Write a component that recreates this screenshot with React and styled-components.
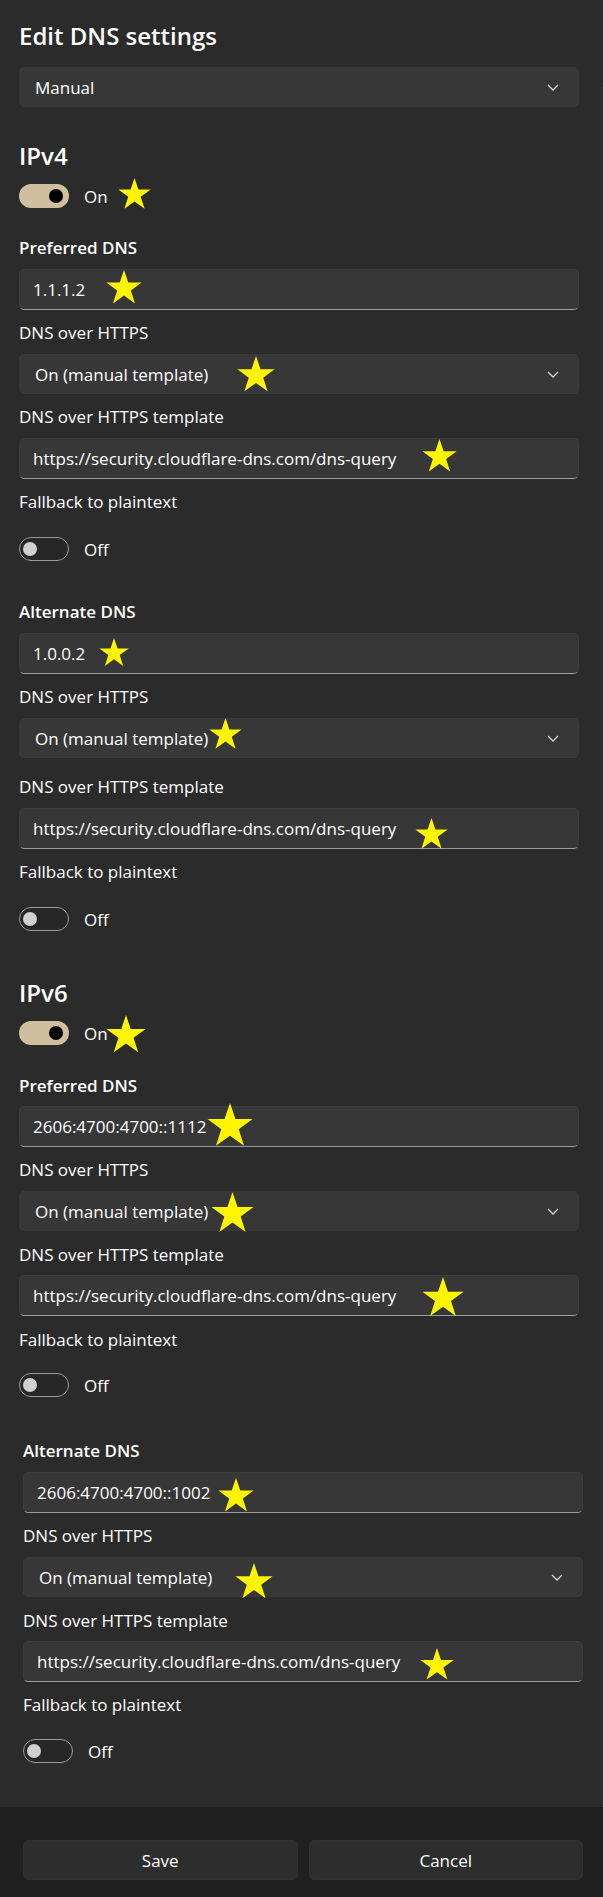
import React from 'react';
import styled, { createGlobalStyle } from 'styled-components';

const GlobalStyle = createGlobalStyle`
  html, body {
    margin: 0;
    padding: 0;
    background: #202020;
  }
  body {
    font-family: 'Open Sans', 'Noto Sans', sans-serif;
    color: #ffffff;
    -webkit-font-smoothing: antialiased;
  }
`;

const Page = styled.div`
  width: 603px;
  display: flex;
  flex-direction: column;
`;

const Content = styled.div`
  position: relative;
  background: #2b2b2b;
  padding: 20px 24px 44px 19px;

  &::after {
    content: '';
    position: absolute;
    right: 0;
    top: 87px;
    bottom: 0;
    width: 1px;
    background: #333333;
  }
`;

const Title = styled.h1`
  margin: 0 0 15px;
  font-size: 24px;
  line-height: 32px;
  font-weight: 600;
`;

const Heading = styled.h2`
  margin: ${(p) => p.$mt}px 0 12px;
  font-size: 24px;
  line-height: 32px;
  font-weight: 600;
`;

const Label = styled.div`
  margin: ${(p) => p.$mt}px 0 ${(p) => p.$mb}px;
  font-size: 17px;
  line-height: 24px;
  font-weight: ${(p) => (p.$strong ? 600 : 400)};
`;

const Group = styled.div`
  display: flex;
  flex-direction: column;
  margin-left: ${(p) => p.$shift || 0}px;
  margin-right: ${(p) => -(p.$shift || 0)}px;
`;

const Field = styled.div`
  position: relative;
  height: 41px;
  box-sizing: border-box;
  display: flex;
  align-items: center;
  padding-left: 13px;
  background: #373737;
  border: 1px solid #3c3c3c;
  border-bottom: 1px solid #9c9c9c;
  border-radius: 5px;
  font-size: 17px;
`;

const Select = styled.div`
  position: relative;
  height: 40px;
  box-sizing: border-box;
  display: flex;
  align-items: center;
  justify-content: space-between;
  padding: 0 19px 0 15px;
  background: #373737;
  border: 1px solid #393939;
  border-radius: 5px;
  font-size: 17px;
`;

const ToggleRow = styled.div`
  position: relative;
  display: flex;
  align-items: center;
  height: 24px;
  font-size: 17px;
`;

const Track = styled.div`
  position: relative;
  width: 50px;
  height: 24px;
  box-sizing: border-box;
  border-radius: 12px;
  background: ${(p) => (p.$on ? '#cfbf9f' : '#272727')};
  border: ${(p) => (p.$on ? 'none' : '1.5px solid #9a9a9a')};
  margin-right: 15px;
`;

const Knob = styled.span`
  position: absolute;
  top: 50%;
  width: ${(p) => (p.$on ? 14 : 14)}px;
  height: ${(p) => (p.$on ? 14 : 14)}px;
  margin-top: -7px;
  border-radius: 50%;
  background: ${(p) => (p.$on ? '#000000' : '#d0d0d0')};
  ${(p) => (p.$on ? 'right: 6px;' : 'left: 3px;')}
`;

const StarMark = styled.svg`
  position: absolute;
  left: ${(p) => p.$x}px;
  top: ${(p) => p.$y}px;
`;

const Footer = styled.div`
  display: grid;
  grid-template-columns: 1fr 1fr;
  gap: 11px;
  padding: 32px 20px 18px 23px;
  background: #202020;
  border-top: 1px solid #1c1c1c;
`;

const Button = styled.button`
  height: 40px;
  border-radius: 5px;
  border: 1px solid #303030;
  background: #2d2d2d;
  color: #ffffff;
  font-family: 'Open Sans', 'Noto Sans', sans-serif;
  font-size: 17px;
  padding: 0;
`;

function Star({ at }) {
  if (!at) return null;
  const [x, y, size] = at;
  return (
    <StarMark $x={x} $y={y} width={size} height={size * 0.95} viewBox="0 0 100 95">
      <polygon
        points="50,0 61.8,35 99,35 69,57 80.5,93 50,71 19.5,93 31,57 1,35 38.2,35"
        fill="#fff500"
      />
    </StarMark>
  );
}

function Chevron() {
  return (
    <svg width="12" height="7" viewBox="0 0 12 7">
      <path d="M1 1 L6 6 L11 1" fill="none" stroke="#d6d6d6" strokeWidth="1.3" />
    </svg>
  );
}

function Toggle({ on, star }) {
  return (
    <ToggleRow>
      <Track $on={on}>
        <Knob $on={on} />
      </Track>
      {on ? 'On' : 'Off'}
      <Star at={star} />
    </ToggleRow>
  );
}

const TEMPLATE = 'https://security.cloudflare-dns.com/dns-query';

function DnsBlock({ block }) {
  const g = block.gaps;
  return (
    <Group $shift={block.shift}>
      <Label $strong $mt={g[0]} $mb={g[1]}>
        {block.label}
      </Label>
      <Field>
        {block.address}
        <Star at={block.stars.addr} />
      </Field>
      <Label $mt={g[2]} $mb={g[3]}>
        DNS over HTTPS
      </Label>
      <Select>
        <span>On (manual template)</span>
        <Chevron />
        <Star at={block.stars.doh} />
      </Select>
      <Label $mt={g[4]} $mb={g[5]}>
        DNS over HTTPS template
      </Label>
      <Field>
        {TEMPLATE}
        <Star at={block.stars.tpl} />
      </Field>
      <Label $mt={g[6]} $mb={g[7]}>
        Fallback to plaintext
      </Label>
      <Toggle on={false} />
    </Group>
  );
}

const sections = [
  {
    name: 'IPv4',
    mt: 33,
    star: [99, -6, 33],
    blocks: [
      {
        label: 'Preferred DNS',
        address: '1.1.1.2',
        gaps: [28, 9, 11, 9, 11, 9, 11, 23],
        stars: { addr: [86, 0, 36], doh: [217, 1, 38], tpl: [402, 0, 35] },
      },
      {
        label: 'Alternate DNS',
        address: '1.0.0.2',
        gaps: [39, 9, 11, 9, 17, 9, 11, 23],
        stars: { addr: [79, 4, 30], doh: [189, -1, 33], tpl: [395, 9, 33] },
      },
    ],
  },
  {
    name: 'IPv6',
    mt: 46,
    star: [87, -6, 40],
    blocks: [
      {
        label: 'Preferred DNS',
        address: '2606:4700:4700::1112',
        gaps: [29, 8, 11, 9, 12, 8, 12, 21],
        stars: { addr: [187, -4, 46], doh: [191, 0, 43], tpl: [402, 1, 42] },
      },
      {
        label: 'Alternate DNS',
        address: '2606:4700:4700::1002',
        shift: 4,
        gaps: [42, 9, 11, 9, 12, 8, 11, 22],
        stars: { addr: [194, 5, 36], doh: [211, 5, 38], tpl: [396, 6, 34] },
      },
    ],
  },
];

export default function App() {
  return (
    <Page>
      <GlobalStyle />
      <Content>
        <Title>Edit DNS settings</Title>
        <Select>
          <span>Manual</span>
          <Chevron />
        </Select>
        {sections.map((s) => (
          <React.Fragment key={s.name}>
            <Heading $mt={s.mt}>{s.name}</Heading>
            <Toggle on star={s.star} />
            {s.blocks.map((b) => (
              <DnsBlock key={b.label} block={b} />
            ))}
          </React.Fragment>
        ))}
      </Content>
      <Footer>
        <Button>Save</Button>
        <Button>Cancel</Button>
      </Footer>
    </Page>
  );
}
